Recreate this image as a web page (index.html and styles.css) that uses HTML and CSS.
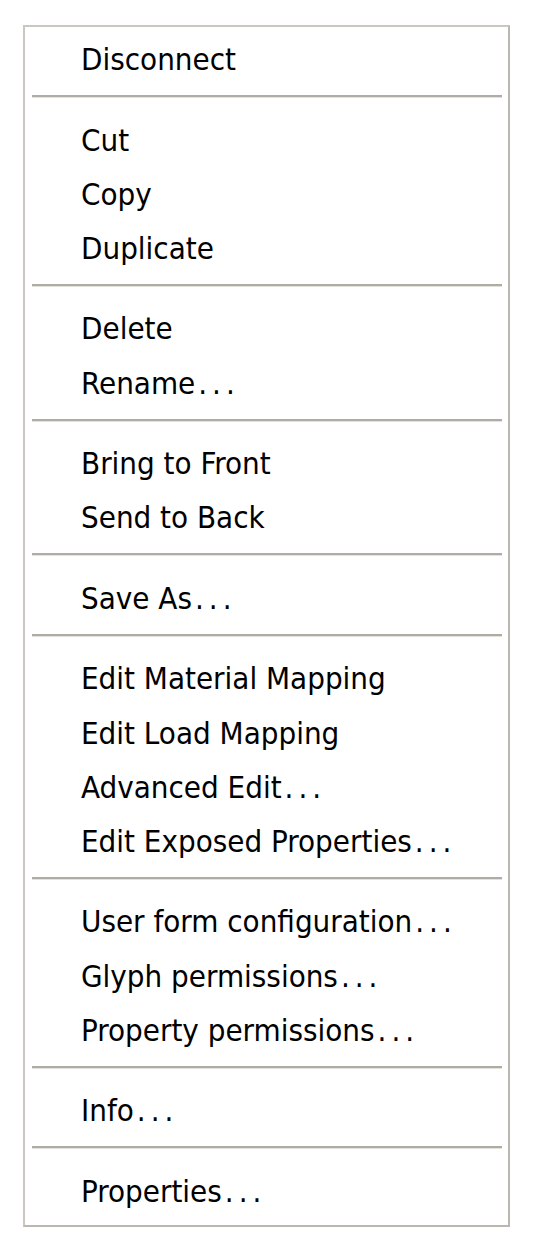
FILE: index.html
```html
<!DOCTYPE html>
<html lang="en">
<head>
    <meta charset="UTF-8">
    <title>Context Menu</title>
    <link rel="stylesheet" href="styles.css">
</head>
<body>
<div class="menu">
    <div class="item">Disconnect</div>
    <div class="sep"></div>
    <div class="item">Cut</div>
    <div class="item">Copy</div>
    <div class="item">Duplicate</div>
    <div class="sep"></div>
    <div class="item">Delete</div>
    <div class="item">Rename<span class="dots">...</span></div>
    <div class="sep"></div>
    <div class="item">Bring to Front</div>
    <div class="item">Send to Back</div>
    <div class="sep"></div>
    <div class="item">Save As<span class="dots">...</span></div>
    <div class="sep"></div>
    <div class="item">Edit Material Mapping</div>
    <div class="item">Edit Load Mapping</div>
    <div class="item">Advanced Edit<span class="dots">...</span></div>
    <div class="item">Edit Exposed Properties<span class="dots">...</span></div>
    <div class="sep"></div>
    <div class="item">User form configuration<span class="dots">...</span></div>
    <div class="item">Glyph permissions<span class="dots">...</span></div>
    <div class="item">Property permissions<span class="dots">...</span></div>
    <div class="sep"></div>
    <div class="item">Info<span class="dots">...</span></div>
    <div class="sep"></div>
    <div class="item">Properties<span class="dots">...</span></div>
</div>
</body>
</html>
```

FILE: styles.css
```css
body{
    margin: 0;
    background: #fff;
    font-family: "DejaVu Sans Condensed", "DejaVu Sans", sans-serif;
}
.menu{
    margin: 25px 0 0 23px;
    width: 483px;
    background: #fff;
    border: 2px solid #c9c7bf;
    border-right-color: #b9b7af;
    border-bottom-color: #b9b7af;
    padding: 2.15px 0 9.85px;
}
.item{
    height: 54.2px;
    box-sizing: border-box;
    padding: 7px 0 0 56px;
    line-height: 46.2px;
    font-size: 31px;
    color: #000;
    white-space: nowrap;
}
/* wide-set ellipsis like the old system font */
.dots{
    letter-spacing: 5px;
    margin-left: 3px;
}
.sep{
    height: 26.3px;
    display: flex;
    align-items: center;
    padding: 0 6px 0 7px;
}
.sep::before{
    content: "";
    flex: 1;
    height: 2px;
    background: #aeaca4;
    border-bottom: 1px solid #e4e2dc;
}
```
